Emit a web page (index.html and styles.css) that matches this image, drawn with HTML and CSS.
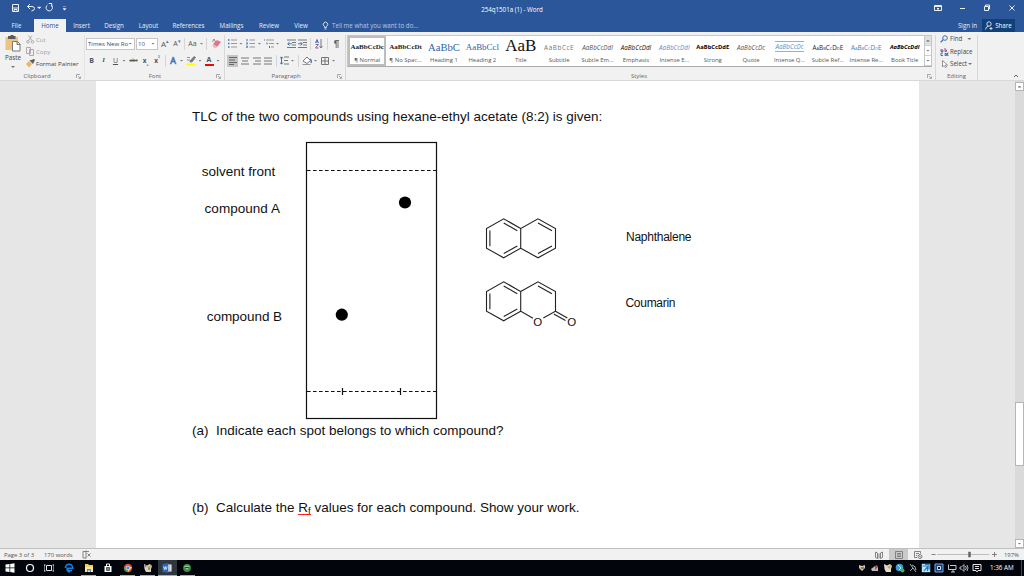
FILE: index.html
```html
<!DOCTYPE html>
<html lang="en">

<head>
    <meta charset="UTF-8">
    <meta name="viewport" content="width=device-width, initial-scale=1.0">
    <title>254q1501a (1) - Word</title>
    <link rel="stylesheet" href="styles.css">
</head>

<body>
    <!-- Title bar -->
    <header class="title-bar">
        <svg class="quick-access" width="80" height="17" viewBox="0 0 80 17">
            <path d="M12.500 4.500h6v7h-6zM12.500 8h6M14 11.500v-2h3v2" />
            <path d="M30 4l-2.500 2.500 2.500 2.500M27.500 6.500h4.500q2.500 0 2.500 2t-3 2.500" stroke-width="1.300" />
            <path d="M37.500 7h3.500l-1.700 1.800z" class="solid" />
            <path d="M51 5a3.200 3.200 0 1 1-3.500 0M48.800 3.500h3v3" stroke-width="1.300" />
            <path d="M63 6.500h3M63 8.500h3l-1.500 1.800z" class="solid" />
        </svg>
        <span class="doc-title">254q1501a (1) - Word</span>
        <svg class="window-buttons" width="94" height="17" viewBox="930 0 94 17">
            <path d="M934.500 5.500h7v5h-7zM934.500 6.500h7M938 10V8M937 9l1-1 1 1" />
            <path d="M960 8.500h5" />
            <path d="M984.500 6.500h4v4h-4zM985.500 6V5h4v4h-1" />
            <path d="M1009.500 5.500l5 5M1014.500 5.500l-5 5" />
        </svg>
    </header>

    <!-- Ribbon tabs -->
    <nav class="tabs">
        <span class="tab">File</span>
        <span class="tab active">Home</span>
        <span class="tab">Insert</span>
        <span class="tab">Design</span>
        <span class="tab">Layout</span>
        <span class="tab">References</span>
        <span class="tab">Mailings</span>
        <span class="tab">Review</span>
        <span class="tab">View</span>
        <span class="tell-me">
            <svg width="7" height="9" viewBox="0 0 7 9"><path d="M2.500 6.500V5.300a2.200 2.200 0 1 1 2 0v1.200zM2.500 8h2" /></svg>
            Tell me what you want to do...
        </span>
        <span class="sign-in">Sign in</span>
        <span class="share">
            <svg width="8" height="9" viewBox="0 0 8 9"><circle cx="4" cy="3" r="2.200" /><path d="M.6 8.500q0-3 3-3.300M4.500 7.500h3M6 6v3" /></svg>
            Share
        </span>
    </nav>

    <!-- Ribbon -->
    <section class="ribbon">
        <div class="group clipboard">
            <div class="group-body">
                <div class="paste">
                    <svg width="16" height="17" viewBox="0 0 16 17">
                        <path d="M0.500 2h12.500v13H0.500z" fill="#edc47e" />
                        <path d="M3 1h2.500V0h3v1h2v3H3z" fill="#5b5b5b" />
                        <path d="M7.500 6.500h5l2.500 2.500v7H7.500zM12 6.500v3h3" fill="#fff" stroke="#777" />
                    </svg>
                    <span>Paste</span>
                    <i class="caret"></i>
                </div>
                <div class="clip-actions">
                    <span class="off"><svg width="9" height="9" viewBox="0 0 9 9"><path d="M2.500 0.500l3.500 5M6 0.500l-3.500 5" stroke="#aaa" fill="none" /><circle cx="2" cy="6.800" r="1.300" stroke="#aaa" fill="none" /><circle cx="6.500" cy="6.800" r="1.300" stroke="#aaa" fill="none" /></svg>Cut</span>
                    <span class="off"><svg width="9" height="9" viewBox="0 0 9 9"><path d="M.5.5h4v6h-4zM3.500 2.500h4v6h-4z" fill="#f0f0f0" stroke="#b0a8b0" /></svg>Copy</span>
                    <span class="painter"><svg width="9" height="9" viewBox="0 0 9 9"><path d="M0 5l3-3 3 3-3 3.500z" fill="#e9b766" /><path d="M3.500 1.500l3.500 3.500 2-4-1-1z" fill="#5f5f5f" /></svg>Format Painter</span>
                </div>
            </div>
            <div class="group-label">Clipboard</div>
            <svg class="launcher" viewBox="0 0 5 5"><path d="M.5 4V.5H4M2 2l2 2M4.500 2.500v2h-2" /></svg>
        </div>

        <div class="group font">
            <div class="group-body stack">
                <div class="row font-row1">
                    <span class="box">Times New Ro<i class="caret"></i></span>
                    <span class="box">10<i class="caret"></i></span>
                    <span class="letter big">A<sup>▴</sup></span>
                    <span class="letter">A<sup>▾</sup></span>
                    <i class="rule"></i>
                    <span class="letter">Aa</span>
                    <i class="caret"></i>
                    <i class="rule"></i>
                    <svg width="9" height="10" viewBox="0 0 9 10"><path d="M1 5l4-4 4 2-4 5z" fill="#e0768a" /><path d="M1 5l4 3-1.500 1.500-3-2z" fill="#f0b4bf" /><path d="M.5 3L2 0l1.500 3" fill="none" stroke="#777" stroke-width=".8" /></svg>
                </div>
                <div class="row font-row2">
                    <b class="letter">B</b>
                    <i class="letter serif">I</i>
                    <u class="letter">U</u>
                    <i class="caret"></i>
                    <s class="letter small">abc</s>
                    <span class="letter strong">x<sub>₂</sub></span>
                    <span class="letter strong">x<sup>²</sup></span>
                    <i class="rule"></i>
                    <span class="letter effect">A</span>
                    <i class="caret"></i>
                    <svg width="10" height="10" viewBox="0 0 10 10"><path d="M1 1.500h3M1 4h3M4 5l4-4.500 1.500 1L6 6H4z" fill="#777" stroke="#777" stroke-width=".8" /><path d="M.5 7.500h9v2h-9z" fill="#ff0" /></svg>
                    <i class="caret"></i>
                    <span class="letter colour">A</span>
                    <i class="caret"></i>
                </div>
            </div>
            <div class="group-label">Font</div>
            <svg class="launcher" viewBox="0 0 5 5"><path d="M.5 4V.5H4M2 2l2 2M4.500 2.500v2h-2" /></svg>
        </div>

        <div class="group paragraph">
            <div class="group-body stack">
                <div class="row para-row1">
                    <svg width="9" height="9" viewBox="0 0 9 9"><path d="M3 1h6M3 4.500h6M3 8h6" stroke="#999" /><path d="M0 1h1.500M0 4.500h1.500M0 8h1.500" stroke="#3f72b8" stroke-width="1.500" /></svg>
                    <i class="caret"></i>
                    <svg width="9" height="9" viewBox="0 0 9 9"><path d="M3.500 1H9M3.500 4.500H9M3.500 8H9" stroke="#999" /><path d="M1 0v2.200M.3 3.700h1v1.500H.3M.3 7h1v1.500H.3" stroke="#3f72b8" fill="none" /></svg>
                    <i class="caret"></i>
                    <svg width="10" height="9" viewBox="0 0 10 9"><path d="M2 1h8M5 4.500h5M7 8h3" stroke="#999" /><path d="M0 1h1M3 3.500v2M5.500 7v2" stroke="#3f72b8" /></svg>
                    <i class="caret"></i>
                    <i></i>
                    <svg width="9" height="9" viewBox="0 0 9 9"><path d="M0 1h9M5 3.500h4M5 6h4M0 8.500h9" stroke="#777" /><path d="M5 4.800H1M2.500 3L.7 4.800l1.800 1.700" stroke="#3f72b8" fill="none" /></svg>
                    <svg width="9" height="9" viewBox="0 0 9 9"><path d="M0 1h9M5 3.500h4M5 6h4M0 8.500h9" stroke="#777" /><path d="M0 4.800h4M2.500 3l1.800 1.800-1.800 1.700" stroke="#3f72b8" fill="none" /></svg>
                    <i class="rule"></i>
                    <svg width="8" height="10" viewBox="0 0 8 10"><path d="M.5 4L2 .5 3.500 4M1 3h2" stroke="#3f72b8" fill="none" /><path d="M.5 5.500h3l-3 3.500h3" stroke="#8e5a9b" fill="none" /><path d="M6 0v9M4.500 7L6 9l1.500-2" stroke="#777" fill="none" /></svg>
                    <i class="rule"></i>
                    <svg width="6" height="8" viewBox="0 0 6 8"><path d="M3 0a2 2 0 0 0 0 4z" fill="#666" /><path d="M3 .5h3M3.200 0v8M5 0v8" stroke="#666" stroke-width=".9" /></svg>
                </div>
                <div class="row para-row2">
                    <span class="pressed"><svg width="8" height="8" viewBox="0 0 8 8"><path d="M0 .5h8M0 3h6M0 5.500h8M0 7.500h5" stroke="#666" /></svg></span>
                    <svg width="8" height="8" viewBox="0 0 8 8"><path d="M0 1h8M1 4h6M0 7h8" stroke="#777" /></svg>
                    <svg width="8" height="8" viewBox="0 0 8 8"><path d="M0 1h8M2 4h6M0 7h8" stroke="#777" /></svg>
                    <svg width="8" height="8" viewBox="0 0 8 8"><path d="M0 1h8M0 4h8M0 7h8" stroke="#777" /></svg>
                    <i class="rule"></i>
                    <svg width="9" height="9" viewBox="0 0 9 9"><path d="M4 1h5M4 4.500h4M4 8h5" stroke="#777" /><path d="M1.500 1v7M0 2.500L1.500.8 3 2.500M0 6.500l1.500 1.700L3 6.500" stroke="#3f72b8" fill="none" /></svg>
                    <i class="caret"></i>
                    <i class="rule"></i>
                    <svg width="10" height="10" viewBox="0 0 10 10"><path d="M1 5l4-4 3.500 3.500L5 7.500z" fill="#fff" stroke="#777" /><path d="M8 3q2 1 1 4" stroke="#3f72b8" fill="none" stroke-width="1.300" /><path d="M.5 8.500h8" stroke="#999" /></svg>
                    <i class="caret"></i>
                    <svg width="8" height="8" viewBox="0 0 8 8"><path d="M.5.5h7v7h-7zM4 .5v7M.5 4h7" stroke="#777" fill="none" /></svg>
                    <i class="caret"></i>
                </div>
            </div>
            <div class="group-label">Paragraph</div>
            <svg class="launcher" viewBox="0 0 5 5"><path d="M.5 4V.5H4M2 2l2 2M4.500 2.500v2h-2" /></svg>
        </div>

        <div class="group styles">
            <div class="gallery">
                <div class="style selected"><span class="sample serif">AaBbCcDc</span><span>¶ Normal</span></div>
                <div class="style"><span class="sample serif">AaBbCcDt</span><span>¶ No Spac...</span></div>
                <div class="style"><span class="sample serif heading1">AaBbC</span><span>Heading 1</span></div>
                <div class="style"><span class="sample serif heading2">AaBbCcl</span><span>Heading 2</span></div>
                <div class="style"><span class="sample serif title">AaB</span><span>Title</span></div>
                <div class="style"><span class="sample subtitle">AaBbCcE</span><span>Subtitle</span></div>
                <div class="style"><span class="sample subtle">AaBbCcDdl</span><span>Subtle Em...</span></div>
                <div class="style"><span class="sample italic">AaBbCcDdl</span><span>Emphasis</span></div>
                <div class="style"><span class="sample intense">AaBbCcDdl</span><span>Intense E...</span></div>
                <div class="style"><span class="sample bold">AaBbCcDdE</span><span>Strong</span></div>
                <div class="style"><span class="sample quote">AaBbCcDc</span><span>Quote</span></div>
                <div class="style"><span class="sample intense lined">AaBbCcDc</span><span>Intense Q...</span></div>
                <div class="style"><span class="sample caps">AaBbCcDdE</span><span>Subtle Ref...</span></div>
                <div class="style"><span class="sample caps blue">AaBbCcDdE</span><span>Intense Re...</span></div>
                <div class="style"><span class="sample bold italic">AaBbCcDdl</span><span>Book Title</span></div>
                <div class="gallery-scroll">
                    <span class="disabled"><i class="caret up"></i></span>
                    <span><i class="caret"></i></span>
                    <span><i class="caret"></i></span>
                </div>
            </div>
            <div class="group-label">Styles</div>
            <svg class="launcher" viewBox="0 0 5 5"><path d="M.5 4V.5H4M2 2l2 2M4.500 2.500v2h-2" /></svg>
        </div>

        <div class="group editing">
            <div class="group-body edit-actions">
                <span><svg width="9" height="8" viewBox="0 0 9 8"><circle cx="5" cy="3" r="2.300" fill="none" stroke="#3f72b8" /><path d="M3.300 4.600L.7 7.300" stroke="#3f72b8" stroke-width="1.300" /></svg>Find<i class="caret"></i></span>
                <span><svg width="9" height="8" viewBox="0 0 9 8"><path d="M1 1v2.500h2V2H1M5 0v3.500h1.500V2H5" fill="none" stroke="#8e5a9b" /><path d="M3 5H1v2.500h2M5 5.500h1.500v2H5zM8.500 5H7.500v2.500h1" fill="none" stroke="#3f72b8" /></svg>Replace</span>
                <span><svg width="9" height="8" viewBox="0 0 9 8"><path d="M2.500.5v6.500l1.500-1.500 1.500 2 1-.5-1-2h2z" fill="#fff" stroke="#777" stroke-width=".8" /></svg>Select<i class="caret near"></i></span>
            </div>
            <div class="group-label">Editing</div>
        </div>
        <svg class="collapse" width="6" height="4" viewBox="0 0 6 4"><path d="M1 3l2-2 2 2" /></svg>
    </section>

    <!-- Document -->
    <main class="workspace">
        <article class="page">
            <p class="intro">TLC of the two compounds using hexane-ethyl acetate (8:2) is given:</p>

            <svg class="figure" width="540" height="284" viewBox="190 138 540 284">
                <!-- TLC plate -->
                <rect x="306.500" y="142.500" width="130" height="276" class="line" />
                <path d="M307 170.500H436M307 391.500H436" class="line dashed" />
                <path d="M342.500 388v7M400.500 388v7" class="line" />
                <circle cx="405" cy="202.500" r="6.100" />
                <circle cx="341.800" cy="314.700" r="6.100" />
                <text x="201.800" y="176" textLength="73.500">solvent front</text>
                <text x="204.600" y="212.500" textLength="75.300">compound A</text>
                <text x="206.800" y="320.800" textLength="75.300">compound B</text>

                <!-- Naphthalene -->
                <path class="bond" d="M520.700 228.500L503.700 218.800 486.500 228.500V248.200L503.700 257.800 520.700 248.200V228.500L538 218.800 555.500 228.500V248.200L538 257.800 520.700 248.200M517.300 230.700L503.700 223M489.900 230.500V246.200M503.700 253.600L517.300 246M538 223L552 230.700M552 246L538 253.600" />
                <text x="626" y="241" class="name" textLength="65.500">Naphthalene</text>

                <!-- Coumarin -->
                <path class="bond" d="M533 318.300L520.700 311.200V291.500L503.700 281.800 486.500 291.500V311.200L503.700 320.800 520.700 311.200M520.700 291.500L538 281.800 555.500 291.500V311.200L543.300 318M555.500 311.200L567.300 318M553.800 314L565.500 320.600M517.300 293.700L503.700 286M489.900 293.500V309.200M503.700 316.600L517.300 309M538 286L552 293.700" />
                <text x="533.300" y="325.500" class="atom">O</text>
                <text x="567.300" y="325.500" class="atom">O</text>
                <text x="625.500" y="306.500" class="name" textLength="50">Coumarin</text>
            </svg>

            <p class="question-a">(a)&nbsp; Indicate each spot belongs to which compound?</p>
            <p class="question-b">(b)&nbsp; Calculate the <span class="misspelt">R<sub>f</sub></span> values for each compound. Show your work.</p>
        </article>
        <div class="scrollbar">
            <span class="scroll-button"><i class="caret up"></i></span>
            <span class="thumb"></span>
            <span class="scroll-button"><i class="caret"></i></span>
        </div>
    </main>

    <!-- Status bar -->
    <footer class="status-bar">
        <span class="page-count">Page 3 of 3</span>
        <span class="word-count">170 words</span>
        <svg width="10" height="9" viewBox="0 0 10 9"><path d="M4 1.500H1v6.500h3M4 .5v8M4 1.500h3M5.500 3.500l3 3M8.500 3.500l-3 3" /></svg>
        <div class="view-controls">
            <svg width="9" height="8" viewBox="0 0 9 8"><path d="M.5 1l2 1v5.500l-2-1zM4 2.500v5M7.500 1l-2 1v5.500l2-1z" /></svg>
            <span class="view-on"><svg width="8" height="8" viewBox="0 0 8 8"><path d="M.5.5h7v7h-7zM2 2.500h4M2 4h4M2 5.500h4" /></svg></span>
            <svg width="9" height="8" viewBox="0 0 9 8"><path d="M.5.5h6v2M.5.5v6H3M2 2.500h3M2 4.500h1" /><circle cx="6" cy="5.500" r="2" /><path d="M4.500 4.500l3 2" /></svg>
            <svg class="zoom-slider" width="72" height="9" viewBox="929 0 72 9"><path d="M931.500 4.500h4M992 4.500h5M994.500 2v5" /><path class="track" d="M937 4.500h52" /><path class="knob" d="M968.500 2h2v5h-2z" /></svg>
            <span class="zoom-level">197%</span>
        </div>
    </footer>

    <!-- Windows taskbar -->
    <footer class="taskbar">
        <div class="apps">
            <span class="app"><svg viewBox="0 0 10 10"><path d="M.5 1.500L4.500 1v3.600h-4zM5.200.9L9.500.3v4.300H5.200zM.5 5.300h4V9l-4-.5zM5.200 5.300h4.300v4.400L5.200 9.100z" fill="#fff" /></svg></span>
            <span class="app"><svg viewBox="0 0 10 10"><circle cx="5" cy="5" r="3.500" fill="none" stroke="#fff" stroke-width="1.200" /></svg></span>
            <span class="app"><svg viewBox="0 0 10 10"><path d="M2.500 2.500h5v5h-5zM1.500 2H0v6h1.500M8.500 2H10v6H8.500" fill="none" stroke="#fff" stroke-width=".9" /></svg></span>
            <span class="app"><svg viewBox="0 0 10 10"><path d="M1.300 5Q2 1.300 5.200 1.300T8.700 5.300H3.300Q3.500 8.300 8 7.400M3.300 5Q2.300 8.600 6 8.900" fill="none" stroke="#0a84e0" stroke-width="1.600" /></svg></span>
            <span class="app open"><svg viewBox="0 0 10 10"><path d="M1 1h3l1 1h4v7H1z" fill="#f5cf5c" /><path d="M1 4h8v5H1z" fill="#ffe69a" /><path d="M3 9V6h4v3H6V7.500H4V9z" fill="#2c9bd9" /></svg></span>
            <span class="app"><svg viewBox="0 0 10 10"><path d="M1.500 3h7v6h-7z" fill="#fff" /><path d="M3.500 3V1h3v2" fill="none" stroke="#fff" /><path d="M3.500 4.500h3v3h-3zM5 4.500v3M3.500 6h3" fill="none" stroke="#222" stroke-width=".7" /></svg></span>
            <span class="app open"><svg viewBox="0 0 10 10"><circle cx="5" cy="5" r="4.200" fill="#e04a3a" /><path d="M1.200 3.500L5 9.200A4.200 4.200 0 0 1 1.200 3.500z" fill="#38a852" /><path d="M5 9.200L9 4H5z" fill="#f8cb3c" /><circle cx="5" cy="5" r="1.900" fill="#4585ee" stroke="#fff" stroke-width=".6" /></svg></span>
            <span class="app open"><svg viewBox="0 0 10 10"><path d="M1 1l3 1.500L7 1l2 2-1 3v3H3L1.500 6z" fill="#d8d3bc" /><path d="M4 4l4-2-1 4z" fill="#c69b3d" /><path d="M2 2l1 2M5 6h2" stroke="#555" /></svg></span>
            <span class="app open current"><svg viewBox="0 0 10 10"><path d="M4 1.500h5.500v7H4z" fill="#fff" /><path d="M5.500 3h3M5.500 5h3M5.500 7h3" stroke="#2b579a" stroke-width=".7" /><path d="M.5 1l5.500-.7v9.400L.5 9z" fill="#2b66b8" /><path d="M1.500 3.500l1 3 .8-3 .8 3 1-3" fill="none" stroke="#fff" stroke-width=".7" /></svg></span>
            <span class="app open"><svg viewBox="0 0 10 10"><circle cx="5" cy="5" r="3.900" fill="#3b8a46" /><path d="M2 3.500q3-2 6 0L5 7z" fill="#8cc790" /><path d="M3 4.500h4" stroke="#244f2b" /></svg></span>
        </div>
        <div class="tray">
            <svg viewBox="0 0 10 10"><path d="M2 2l3 1 3-1v3L5 8 2 5z" fill="#c9c2b3" /><path d="M4 4h3v2H4z" fill="#ad7440" /></svg>
            <svg viewBox="0 0 10 10"><path d="M1 6l4-3 3 1v4H2z" fill="#b9b9b9" /><path d="M5 3l2-1 1 2-3 3z" fill="#c0463b" /></svg>
            <svg viewBox="0 0 10 10"><path d="M1 1l3 1.500L7 1l2 2-1 3v3H3L1.500 6z" fill="#e1dccb" /><path d="M4 4l4-2-1 4z" fill="#d9a33e" /></svg>
            <svg viewBox="0 0 10 10"><circle cx="4.500" cy="4.500" r="3.800" fill="#3c9ed0" /><path d="M3 2l3 3-2 2" stroke="#d8eef9" fill="none" /><circle cx="7.500" cy="7.500" r="2" fill="#4bab50" /></svg>
            <svg viewBox="0 0 10 10"><path d="M2 1l3 4-3 3M4 2q4 1 4 5M5 5l3 4" stroke="#aaa" fill="none" /></svg>
            <svg viewBox="0 0 10 10"><path d="M.8.8h8.400v8.400H.8z" fill="#bce3f5" /><path d="M1.500 3h5v5M4 1.500h4v5M3 8l4-5" stroke="#2579c4" fill="none" stroke-width="1.200" /></svg>
            <svg viewBox="0 0 10 10"><path d="M1 1h8v8H1z" fill="#153d75" stroke="#79a7df" /><path d="M3.500 3.500h3v3h-3z" fill="#050a14" stroke="#dce8f8" /></svg>
            <svg viewBox="0 0 10 10"><path d="M3 2.500h6v4H3M6 7v2M4 9h4M1.500 1.500v5h2" stroke="#ddd" fill="none" stroke-width=".9" /></svg>
            <svg viewBox="0 0 10 10"><path d="M1 4h1.500L5 1.500v7L2.500 6H1zM6.500 3q1.500 2 0 4M8 2q2 3 0 6" stroke="#ddd" fill="none" stroke-width=".8" /></svg>
            <svg viewBox="0 0 10 10"><path d="M1 1.500h8v6H6L5 9 4 7.500H1zM3 3.500h4M3 5.500h4" stroke="#fff" fill="none" stroke-width=".9" /></svg>
            <span class="clock">1:36 AM</span>
        </div>
    </footer>
</body>

</html>
```
FILE: styles.css
```css
/* Base styles */
* {
    box-sizing: border-box;
}

body {
    margin: 0;
    width: 1024px;
    height: 576px;
    overflow: hidden;
    display: flex;
    flex-direction: column;
    font-family: "Open Sans", "Noto Sans", sans-serif;
    font-size: 6.2px;
    line-height: 8px;
    color: #444;
    white-space: nowrap;
}

svg {
    display: block;
    flex: none;
}

.caret {
    width: 4px;
    height: 2px;
    flex: none;
    background: #777;
    clip-path: polygon(0 0, 100% 0, 50% 100%);
}

.caret.up {
    clip-path: polygon(50% 0, 100% 100%, 0 100%);
}

/* Title bar */
.title-bar {
    height: 17px;
    flex: none;
    display: grid;
    grid-template-columns: 94px 1fr 94px;
    align-items: center;
    background: #2b579a;
    color: #fff;
}

.title-bar path {
    fill: none;
    stroke: #fff;
    stroke-width: 0.9;
}

.title-bar .solid {
    fill: #fff;
    stroke-width: 0.4;
}

.doc-title {
    text-align: center;
    padding-top: 2px;
    font-size: 6.2px;
}

/* Tabs */
.tabs {
    height: 15px;
    flex: none;
    display: grid;
    grid-template-columns: 33px 33px 31px 34px 35px 45px 41px 34px 30px 1fr 29px 33px;
    padding: 2px 9px 0 0;
    align-items: stretch;
    background: #2b579a;
    color: #e8eef7;
    line-height: 13px;
    text-align: center;
}

.tab.active {
    background: #f1f1f1;
    color: #2b579a;
    margin: 0 0 0 1px;
}

.tell-me {
    display: flex;
    align-items: center;
    gap: 3px;
    padding-left: 6px;
    color: #b8c8e2;
    font-size: 6.2px;
}

.tabs path,
.tabs circle {
    fill: none;
    stroke: #e0e8f4;
    stroke-width: 0.9;
}

.share {
    display: flex;
    align-items: center;
    justify-content: center;
    gap: 2px;
    background: #124078;
    color: #fff;
}

/* Ribbon */
.ribbon {
    height: 49px;
    flex: none;
    display: flex;
    position: relative;
    padding: 3px 0 0;
    background: #f1f1f1;
    border-bottom: 1px solid #d8d8d8;
}

.group {
    position: relative;
    flex: none;
    display: flex;
    flex-direction: column;
    justify-content: space-between;
    border-right: 1px solid #d8d8d8;
}

.group-label {
    text-align: center;
    color: #666;
    line-height: 7px;
    font-size: 6px;
}

.launcher {
    position: absolute;
    right: 3px;
    bottom: 1px;
    width: 5px;
    height: 5px;
    fill: none;
    stroke: #888;
    stroke-width: 0.7;
}

.clipboard {
    width: 85px;
    border-right-color: #e4e4e4;
}

.clipboard .group-label {
    padding-right: 10px;
}

.clipboard .group-body {
    display: flex;
}

.paste {
    width: 26px;
    display: flex;
    flex-direction: column;
    align-items: center;
    font-size: 6.3px;
}

.paste .caret {
    margin-top: 4px;
}

.paste span {
    margin-top: 2px;
}

.clip-actions {
    display: flex;
    flex-direction: column;
    justify-content: space-between;
    height: 33px;
}

.clip-actions span {
    display: flex;
    align-items: center;
    gap: 1px;
    font-size: 6.1px;
}

.clip-actions .off {
    color: #a0a0a0;
}

.font {
    width: 140px;
    padding-left: 1px;
}

.paragraph {
    width: 121px;
    padding-left: 2px;
}

.stack {
    display: flex;
    flex-direction: column;
    gap: 4px;
    padding-top: 2px;
}

.row {
    display: grid;
    height: 13px;
    align-items: center;
    justify-items: center;
}

.font-row1 {
    grid-template-columns: 50px 23px 12px 12px 3px 13px 5px 5px 14px;
}

.font-row2 {
    grid-template-columns: 11px 13px 11px 6px 13px 11px 12px 4px 12px 5px 13px 6px 12px 6px;
}

.para-row1 {
    grid-template-columns: 11px 6px 13px 5px 13px 5px 5px 12px 11px 5px 12px 5px 12px;
}

.para-row2 {
    grid-template-columns: 11px 13px 11px 12px 4px 12px 5px 6px 12px 5px 13px 5px;
}

.box {
    display: flex;
    align-items: center;
    justify-content: space-between;
    justify-self: start;
    width: calc(100% - 1px);
    height: 12px;
    padding: 0 2px 0 1px;
    border: 1px solid #c6c6c6;
    background: #fff;
    color: #3e4a63;
    font-size: 6.1px;
}

.rule {
    width: 1px;
    height: 12px;
    background: #d5d5d5;
}

.letter {
    font-size: 7px;
    line-height: 9px;
    color: #555;
}

.letter.big {
    font-size: 8px;
}

.letter.small {
    font-size: 5px;
}

.letter.strong {
    font-weight: bold;
    font-size: 6.5px;
}

.letter.serif {
    font-family: "Liberation Serif", serif;
    font-weight: bold;
}

.letter sup,
.letter sub {
    font-size: 5px;
    line-height: 0;
    color: #3f72b8;
}

.letter.effect {
    font-size: 9px;
    color: #fff;
    -webkit-text-stroke: 0.7px #3f72b8;
}

.letter.colour {
    width: 9px;
    height: 10px;
    line-height: 8px;
    font-weight: bold;
    text-align: center;
    border-bottom: 2px solid #f00;
}

.pressed {
    width: 11px;
    height: 12px;
    display: grid;
    place-items: center;
    background: #c5c5c5;
}

/* Style gallery */
.styles {
    width: 590px;
    padding: 0 4px 0 1px;
}

.gallery {
    display: flex;
    width: 585px;
    height: 32px;
    background: #fff;
    border: 1px solid #c6c6c6;
    border-bottom-color: #ababab;
}

.style {
    width: 38.4px;
    flex: none;
    display: flex;
    flex-direction: column;
    align-items: center;
    justify-content: space-between;
    overflow: hidden;
    padding: 3px 0 2px;
    font-size: 5.9px;
    color: #555;
}

.style.selected {
    outline: 2px solid #bdbdbd;
    outline-offset: -2px;
}

.sample {
    height: 16px;
    line-height: 17px;
    font-size: 6.3px;
    color: #222;
}

.sample.serif {
    font-family: "Liberation Serif", serif;
    font-size: 7px;
    font-weight: bold;
}

.sample.heading1,
.sample.heading2 {
    font-size: 10.6px;
    font-weight: normal;
    color: #2e64a8;
}

.sample.heading2 {
    font-size: 8.9px;
}

.sample.title {
    font-size: 17px;
    font-weight: normal;
    line-height: 13px;
    color: #111;
}

.sample.subtitle {
    letter-spacing: 0.6px;
    color: #777;
}

.sample.subtle,
.sample.quote {
    font-style: italic;
    color: #555;
}

.sample.italic {
    font-style: italic;
    color: #111;
}

.sample.intense {
    font-style: italic;
    color: #5b8fce;
}

.sample.bold {
    font-weight: bold;
    font-size: 5.8px;
    color: #000;
}

.sample.lined {
    height: 11px;
    line-height: 10px;
    margin-top: 2px;
    border-top: 1px solid #8db0dc;
    border-bottom: 1px solid #8db0dc;
}

.sample.caps {
    font-variant: small-caps;
}

.sample.blue {
    color: #3f7cc4;
}

.gallery-scroll {
    flex: 1;
    display: grid;
    grid-template-rows: 1fr 1fr 1fr;
    border-left: 1px solid #c6c6c6;
}

.gallery-scroll span {
    display: grid;
    place-items: center;
    border-bottom: 1px solid #d0d0d0;
}

.gallery-scroll .disabled {
    background: #e1e1e1;
}

.editing {
    width: 42px;
}

.edit-actions {
    display: flex;
    flex-direction: column;
    justify-content: space-between;
    height: 33px;
    padding: 0 0 0 4px;
}

.edit-actions span {
    display: flex;
    align-items: center;
    gap: 1px;
}

.edit-actions .caret {
    margin-left: 4px;
}

.edit-actions .near {
    margin-left: 0;
}

.collapse {
    position: absolute;
    right: 5px;
    bottom: 2px;
    fill: none;
    stroke: #666;
}

/* Document */
.workspace {
    flex: 1;
    min-height: 0;
    display: flex;
    justify-content: space-between;
    background: #e6e6e6;
}

.page {
    width: 823px;
    margin-left: 96px;
    padding: 27px 0 0 94px;
    background: #fff;
    color: #111;
    font-family: "Liberation Sans", Arial, sans-serif;
    font-size: 13.47px;
    line-height: 18px;
}

.page p {
    margin: 0 0 0 2px;
}

.figure {
    margin-top: 12px;
}

.page .question-b {
    margin-top: 59px;
}

.misspelt {
    display: inline-block;
    height: 16px;
    line-height: 18px;
    vertical-align: top;
    border-bottom: 1px solid #ff2020;
}

.misspelt sub {
    font-size: 9.5px;
    line-height: 0;
    vertical-align: -2px;
}

.figure text {
    font-size: 13.5px;
    fill: #111;
}

.figure .name {
    font-size: 12px;
}

.figure .atom {
    font-size: 11.5px;
}

.line {
    fill: none;
    stroke: #111;
    stroke-width: 1.2;
}

.dashed {
    stroke-dasharray: 3.6 2.4;
}

.bond {
    fill: none;
    stroke: #222;
    stroke-width: 1.1;
}

/* Scrollbar */
.scrollbar {
    width: 9px;
    display: flex;
    flex-direction: column;
    background: #dadada;
    padding: 1px 0 0;
}

.scroll-button {
    height: 9px;
    flex: none;
    display: grid;
    place-items: center;
    background: #fff;
    border: 1px solid #b5b5b5;
}

.thumb {
    height: 64px;
    flex: none;
    margin: 311px 0 73px;
    background: #fff;
    border: 1px solid #b5b5b5;
}

/* Status bar */
.status-bar {
    height: 12px;
    flex: none;
    display: flex;
    align-items: center;
    padding: 0 5px 0 4px;
    background: #f1f1f1;
    border-top: 1px solid #c0c0c0;
    font-size: 5.9px;
    color: #555;
}

.status-bar path,
.status-bar circle {
    fill: none;
    stroke: #777;
    stroke-width: 0.9;
}

.status-bar .track {
    stroke: #b5b5b5;
}

.status-bar .knob {
    fill: #666;
    stroke: #666;
    stroke-width: 0.5;
}

.page-count {
    width: 40px;
}

.word-count {
    width: 38px;
}

.view-controls {
    margin-left: auto;
    display: flex;
    align-items: center;
}

.view-on {
    display: grid;
    place-items: center;
    width: 19px;
    height: 11px;
    margin: 0 6px 0 5px;
    background: #cacaca;
}

.zoom-slider {
    margin-left: 6px;
}

.zoom-level {
    width: 15px;
    margin-left: 3px;
}

/* Taskbar */
.taskbar {
    height: 16px;
    flex: none;
    display: flex;
    justify-content: space-between;
    background: #02060c;
}

.apps {
    display: flex;
}

.app {
    width: 19.7px;
    display: grid;
    place-items: center;
    background-repeat: no-repeat;
    background-position: center bottom;
    background-size: 15px 1px;
}

.app svg,
.tray svg {
    width: 10px;
    height: 10px;
}

.app.open {
    background-image: linear-gradient(#76b9ed, #76b9ed);
}

.app.current {
    background-color: #30363d;
    background-size: 100% 1px;
}

.tray {
    display: flex;
    align-items: center;
    gap: 2.8px;
    width: 167px;
}

.clock {
    margin-left: 5px;
    padding-right: 7px;
    border-right: 1px solid #444;
    line-height: 16px;
    color: #fff;
    font-size: 6.3px;
}
```
